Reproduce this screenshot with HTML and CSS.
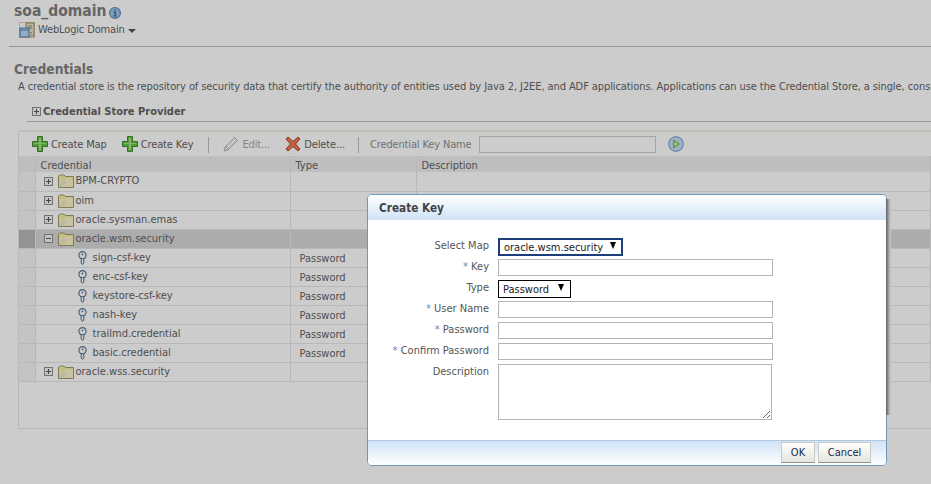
FILE: index.html
```html
<!DOCTYPE html>
<html lang="en">
<head>
    <meta charset="UTF-8">
    <title>Credentials - soa_domain</title>
    <link rel="stylesheet" href="styles.css">
</head>
<body>
    <!-- Icons -->
    <svg class="icon-defs" width="0" height="0">
        <symbol id="i-expand" viewBox="0 0 9 9">
            <rect x="0.5" y="0.5" width="8" height="8" fill="#f4f4f4" stroke="#8f8f8f"/>
            <path d="M2 4.5h5M4.5 2v5" stroke="#555" fill="none"/>
        </symbol>
        <symbol id="i-collapse" viewBox="0 0 9 9">
            <rect x="0.5" y="0.5" width="8" height="8" fill="#f4f4f4" stroke="#8f8f8f"/>
            <path d="M2 4.5h5" stroke="#555" fill="none"/>
        </symbol>
        <symbol id="i-folder" viewBox="0 0 16 14">
            <path d="M0.5 13.5V2.5L1.5 1H6L7.5 2.5H15.5V13.5Z" fill="#f6eca6" stroke="#a39a63"/>
            <path d="M2 13V5H7L8 4H15V13Z" fill="#faf4c4"/>
            <path d="M2 12L6 6M3 12L7 7M5 12L8 8" stroke="#e0e0d0" fill="none"/>
        </symbol>
        <symbol id="i-key" viewBox="0 0 9 14">
            <circle cx="4.5" cy="4.2" r="3.6" fill="#fff" stroke="#4f6f92" stroke-width="1.1"/>
            <circle cx="4.5" cy="3.4" r="0.9" fill="#4f6f92"/>
            <path d="M3.2 8V12L4.5 13.5L5.8 12V8" fill="#fff" stroke="#4f6f92"/>
        </symbol>
        <symbol id="i-plus" viewBox="0 0 16 16">
            <path d="M5.5 0.5H10.5V5.5H15.5V10.5H10.5V15.5H5.5V10.5H0.5V5.5H5.5Z" fill="#6cc24a" stroke="#3f8f2c"/>
            <path d="M7 2H9V7H14V8H9V14H7V8H2V7H7Z" fill="#a4e486"/>
        </symbol>
        <symbol id="i-edit" viewBox="0 0 16 16">
            <path d="M1 15L2 11L11.5 1.5L14.5 4.5L5 14Z" fill="#f2f2f2" stroke="#b5b5b5"/>
            <path d="M3 11L6 13.5" stroke="#b5b5b5" fill="none"/>
        </symbol>
        <symbol id="i-delete" viewBox="0 0 16 16">
            <path d="M1 3L3 1L8 5.5L13 1L15 3L10.5 8L15 13L13 15L8 10.5L3 15L1 13L5.5 8Z" fill="#ee7a55" stroke="#b53d22"/>
        </symbol>
    </svg>

    <div class="page">
        <div class="domain-head">
            <h1 class="domain-title">soa_domain
                <svg class="info-icon" width="12" height="12" viewBox="0 0 11 11">
                    <circle cx="5.5" cy="5.5" r="5" fill="#9cc3e8" stroke="#5c88b5"/>
                    <path d="M5.5 2.2v1.4M4.4 4.9h1.3v3.2M4.2 8.3h2.8" stroke="#1f5a96" fill="none"/>
                </svg>
            </h1>
            <div class="domain-menu">
                <svg width="16" height="16" viewBox="0 0 16 16">
                    <rect x="0.5" y="0.5" width="15" height="15" fill="none" stroke="#e08a3c" stroke-dasharray="1 1"/>
                    <rect x="7" y="1" width="8" height="13" fill="#e8e4cf" stroke="#8f8a6a"/>
                    <path d="M9 4h4M9 6h4M11 11h2" stroke="#8f8a6a" fill="none"/>
                    <rect x="1" y="6" width="9" height="9" fill="#bcd8f2" stroke="#4f7fae"/>
                    <path d="M1 8h9" stroke="#4f7fae" fill="none"/>
                </svg>
                <span class="domain-name">WebLogic Domain</span>
                <span class="caret"></span>
            </div>
        </div>

        <section class="credentials">
            <h2>Credentials</h2>
            <p class="intro">A credential store is the repository of security data that certify the authority of entities used by Java 2, J2EE, and ADF applications. Applications can use the Credential Store, a single, cons</p>

            <div class="provider">
                <svg width="9" height="9"><use href="#i-expand"/></svg>
                <span>Credential Store Provider</span>
            </div>

            <div class="panel">
                <div class="toolbar">
                    <span class="tool"><svg width="16" height="16"><use href="#i-plus"/></svg>Create Map</span>
                    <span class="tool tool-last"><svg width="16" height="16"><use href="#i-plus"/></svg>Create Key</span>
                    <span class="divider"></span>
                    <span class="tool disabled"><svg width="16" height="16"><use href="#i-edit"/></svg>Edit...</span>
                    <span class="tool"><svg width="16" height="16"><use href="#i-delete"/></svg>Delete...</span>
                    <span class="divider"></span>
                    <label class="search-label">Credential Key Name</label>
                    <input class="search-input" type="text" disabled>
                    <svg class="go-icon" width="16" height="16" viewBox="0 0 16 16">
                        <circle cx="8" cy="8" r="7.3" fill="#c7dff5" stroke="#6f95bd"/>
                        <path d="M5.8 4.2L11.2 8L5.8 11.8Z" fill="#d4ecb0" stroke="#6aa63a"/>
                    </svg>
                </div>

                <table class="cred-table">
                    <colgroup>
                        <col class="col-head"><col class="col-name"><col class="col-type"><col>
                    </colgroup>
                    <thead>
                        <tr><th></th><th>Credential</th><th>Type</th><th>Description</th></tr>
                    </thead>
                    <tbody>
                        <tr><td class="row-head"></td><td class="map"><svg class="toggle" width="9" height="9"><use href="#i-expand"/></svg><svg class="folder" width="16" height="14"><use href="#i-folder"/></svg>BPM-CRYPTO</td><td></td><td></td></tr>
                        <tr><td class="row-head"></td><td class="map"><svg class="toggle" width="9" height="9"><use href="#i-expand"/></svg><svg class="folder" width="16" height="14"><use href="#i-folder"/></svg>oim</td><td></td><td></td></tr>
                        <tr><td class="row-head"></td><td class="map"><svg class="toggle" width="9" height="9"><use href="#i-expand"/></svg><svg class="folder" width="16" height="14"><use href="#i-folder"/></svg>oracle.sysman.emas</td><td></td><td></td></tr>
                        <tr class="selected"><td class="row-head"></td><td class="map"><svg class="toggle" width="9" height="9"><use href="#i-collapse"/></svg><svg class="folder" width="16" height="14"><use href="#i-folder"/></svg>oracle.wsm.security</td><td></td><td></td></tr>
                        <tr><td class="row-head"></td><td class="key"><svg width="9" height="14"><use href="#i-key"/></svg>sign-csf-key</td><td class="type">Password</td><td></td></tr>
                        <tr><td class="row-head"></td><td class="key"><svg width="9" height="14"><use href="#i-key"/></svg>enc-csf-key</td><td class="type">Password</td><td></td></tr>
                        <tr><td class="row-head"></td><td class="key"><svg width="9" height="14"><use href="#i-key"/></svg>keystore-csf-key</td><td class="type">Password</td><td></td></tr>
                        <tr><td class="row-head"></td><td class="key"><svg width="9" height="14"><use href="#i-key"/></svg>nash-key</td><td class="type">Password</td><td></td></tr>
                        <tr><td class="row-head"></td><td class="key"><svg width="9" height="14"><use href="#i-key"/></svg>trailmd.credential</td><td class="type">Password</td><td></td></tr>
                        <tr><td class="row-head"></td><td class="key"><svg width="9" height="14"><use href="#i-key"/></svg>basic.credential</td><td class="type">Password</td><td></td></tr>
                        <tr><td class="row-head"></td><td class="map"><svg class="toggle" width="9" height="9"><use href="#i-expand"/></svg><svg class="folder" width="16" height="14"><use href="#i-folder"/></svg>oracle.wss.security</td><td></td><td></td></tr>
                    </tbody>
                </table>
            </div>
        </section>
    </div>

    <!-- Modal -->
    <div class="glass"></div>
    <div class="dialog">
        <div class="dialog-title">Create Key</div>
        <form class="dialog-body">
            <label>Select Map</label>
            <div class="select-wrap"><select class="select-map"><option>oracle.wsm.security</option></select></div>
            <label><span class="req">*</span> Key</label>
            <input type="text">
            <label>Type</label>
            <div class="select-wrap"><select class="select-type"><option>Password</option></select></div>
            <label><span class="req">*</span> User Name</label>
            <input type="text">
            <label><span class="req">*</span> Password</label>
            <input type="password">
            <label><span class="req">*</span> Confirm Password</label>
            <input type="password">
            <label>Description</label>
            <textarea></textarea>
        </form>
        <div class="dialog-footer">
            <button type="button" class="btn-ok">OK</button>
            <button type="button" class="btn-cancel">Cancel</button>
        </div>
    </div>
</body>
</html>
```

FILE: styles.css
```css
* {
    margin: 0;
    padding: 0;
    box-sizing: border-box;
}

html, body {
    height: 484px;
    overflow: hidden;
}

body {
    background-color: #fff;
    color: #636363;
    font-family: "DejaVu Sans Condensed", "DejaVu Sans", sans-serif;
    font-size: 11px;
    line-height: 14px;
}

.icon-defs {
    position: absolute;
}

svg {
    flex: none;
}

/* Domain header */
.domain-head {
    height: 47px;
    margin-left: 9px;
    padding: 2px 0 0 5px;
    border-bottom: 1px solid #bcbcbc;
}

.domain-title {
    display: flex;
    align-items: center;
    gap: 3px;
    height: 18px;
    font-size: 15.5px;
    line-height: 18px;
    color: #7f7f7f;
}

.info-icon {
    margin-top: 3px;
}

.domain-menu {
    display: flex;
    align-items: center;
    gap: 3px;
    height: 16px;
    margin: 2px 0 0 5px;
}

.domain-name {
    letter-spacing: -0.15px;
}

.caret {
    width: 0;
    height: 0;
    margin-top: 1px;
    border-left: 4px solid transparent;
    border-right: 4px solid transparent;
    border-top: 4px solid #555;
}

/* Credentials section */
.credentials {
    padding: 14px 0 0 14px;
}

.credentials h2 {
    height: 17px;
    font-size: 13.7px;
    line-height: 17px;
    color: #7f7f7f;
}

.intro {
    margin: 2px 0 0 4px;
    letter-spacing: -0.09px;
    white-space: nowrap;
}

.provider {
    display: flex;
    align-items: center;
    gap: 2px;
    height: 21px;
    margin: 7px 0 0 13px;
    padding: 1px 0 0 5px;
    border-bottom: 1px solid #c4c4c4;
    font-weight: bold;
}

/* Table panel */
.panel {
    height: 299px;
    margin: 8px 0 0 4px;
    border-left: 1px solid #e6e6e6;
    border-bottom: 1px solid #e6e6e6;
    border-top: 2px solid #f0f0e4;
}

.toolbar {
    display: flex;
    align-items: center;
    height: 24px;
    padding: 1px 0 0 13px;
    letter-spacing: -0.12px;
}

.toolbar svg {
    margin-top: -1px;
}

.tool {
    display: flex;
    align-items: center;
    gap: 3px;
    margin-right: 15px;
}

.tool-last {
    margin-right: 17px;
}

.tool.disabled {
    color: #a8a8a8;
}

.divider {
    width: 1px;
    height: 16px;
    margin-right: 14px;
    margin-left: -2px;
    background-color: #c2c2b4;
}

.search-label {
    margin-left: -3px;
    color: #8e8e8e;
    letter-spacing: -0.15px;
}

.search-input {
    width: 177px;
    height: 17px;
    margin-left: 8px;
    border: 1px solid #cfcfcf;
    background-color: #fff;
}

.go-icon {
    margin-left: 12px;
}

.cred-table {
    width: 100%;
    table-layout: fixed;
    border-collapse: collapse;
}

.col-head {
    width: 16px;
}

.col-name {
    width: 255px;
}

.col-type {
    width: 126px;
}

.cred-table th {
    height: 16px;
    padding: 3px 0 0 5px;
    background-color: #eee;
    border-right: 1px solid #e6e6e6;
    font-weight: normal;
    line-height: 13px;
    text-align: left;
}

.cred-table td {
    height: 19px;
    border-right: 1px solid #e6e6e6;
    border-bottom: 1px solid #e6e6e6;
    white-space: nowrap;
}

.cred-table .row-head {
    background-color: #f5f5f5;
}

.cred-table .selected td {
    background-color: #d8d8d8;
}

.cred-table .selected .row-head {
    background-color: #b8b8b8;
}

.map svg,
.key svg {
    vertical-align: middle;
}

.map .toggle {
    margin: 0 5px 0 8px;
}

.map .folder {
    margin-right: 2px;
}

.key svg {
    margin: 0 6px 0 42px;
}

.cred-table .type {
    padding: 2px 0 0 9px;
}

/* Modal dialog */
.glass {
    position: absolute;
    top: 0;
    left: 0;
    width: 100%;
    height: 100%;
    background-color: rgba(0, 0, 0, 0.2);
}

.dialog {
    position: absolute;
    top: 194px;
    left: 367px;
    width: 520px;
    height: 272px;
    display: flex;
    flex-direction: column;
    background-color: #fff;
    border: 1px solid #6f97b8;
    border-radius: 5px;
}

/* the shadow only runs down part of the right edge */
.dialog::after {
    content: "";
    position: absolute;
    top: 4px;
    left: 100%;
    width: 5px;
    height: 216px;
    background: linear-gradient(to right, #5f5f5f, #b4b4b4 70%, #cbcbcb);
}

.dialog-title {
    height: 25px;
    padding: 6px 0 0 11px;
    background: linear-gradient(to bottom, #fff, #cfe3f6);
    border-radius: 4px 4px 0 0;
    color: #444;
    font-size: 11.7px;
    font-weight: bold;
}

.dialog-body {
    flex: 1;
    display: grid;
    grid-template-columns: 121px 1fr;
    grid-auto-rows: 21px;
    column-gap: 9px;
    padding-top: 18px;
    color: #555;
}

.dialog-body label {
    padding-top: 1px;
    text-align: right;
}

.req {
    color: #5a8fc4;
}

.dialog-body input {
    width: 275px;
    height: 17px;
    border: 1px solid #b5b5ad;
}

.dialog-body textarea {
    display: block;
    width: 274px;
    height: 56px;
    border: 1px solid #b5b5ad;
}

.select-wrap {
    position: relative;
    width: max-content;
}

.select-wrap::after {
    content: "";
    position: absolute;
    top: 4px;
    right: 7px;
    border-left: 3.5px solid transparent;
    border-right: 3.5px solid transparent;
    border-top: 7px solid #000;
}

.select-wrap select {
    display: block;
    height: 18px;
    padding: 1px 0 0 4px;
    appearance: none;
    background-color: #fff;
    color: #222;
    font: inherit;
    border-radius: 0;
}

.select-map {
    width: 125px;
    border: 2px solid #1c3f7c;
}

.select-type {
    width: 73px;
    border: 1px solid #000;
}

.dialog-footer {
    display: flex;
    justify-content: flex-end;
    gap: 3px;
    height: 25px;
    padding: 1px 15px 0 0;
    background: linear-gradient(to bottom, #cfe3f6, #fff);
    border-top: 1px solid #b2c8e2;
    border-radius: 0 0 4px 4px;
}

.dialog-footer button {
    height: 21px;
    border: 1px solid #c9c9c5;
    border-bottom-color: #8f8f8b;
    background: linear-gradient(to bottom, #fff, #e4e4de);
    color: #222a4a;
    font: inherit;
}

.btn-ok {
    width: 34px;
}

.btn-cancel {
    width: 53px;
}
```
